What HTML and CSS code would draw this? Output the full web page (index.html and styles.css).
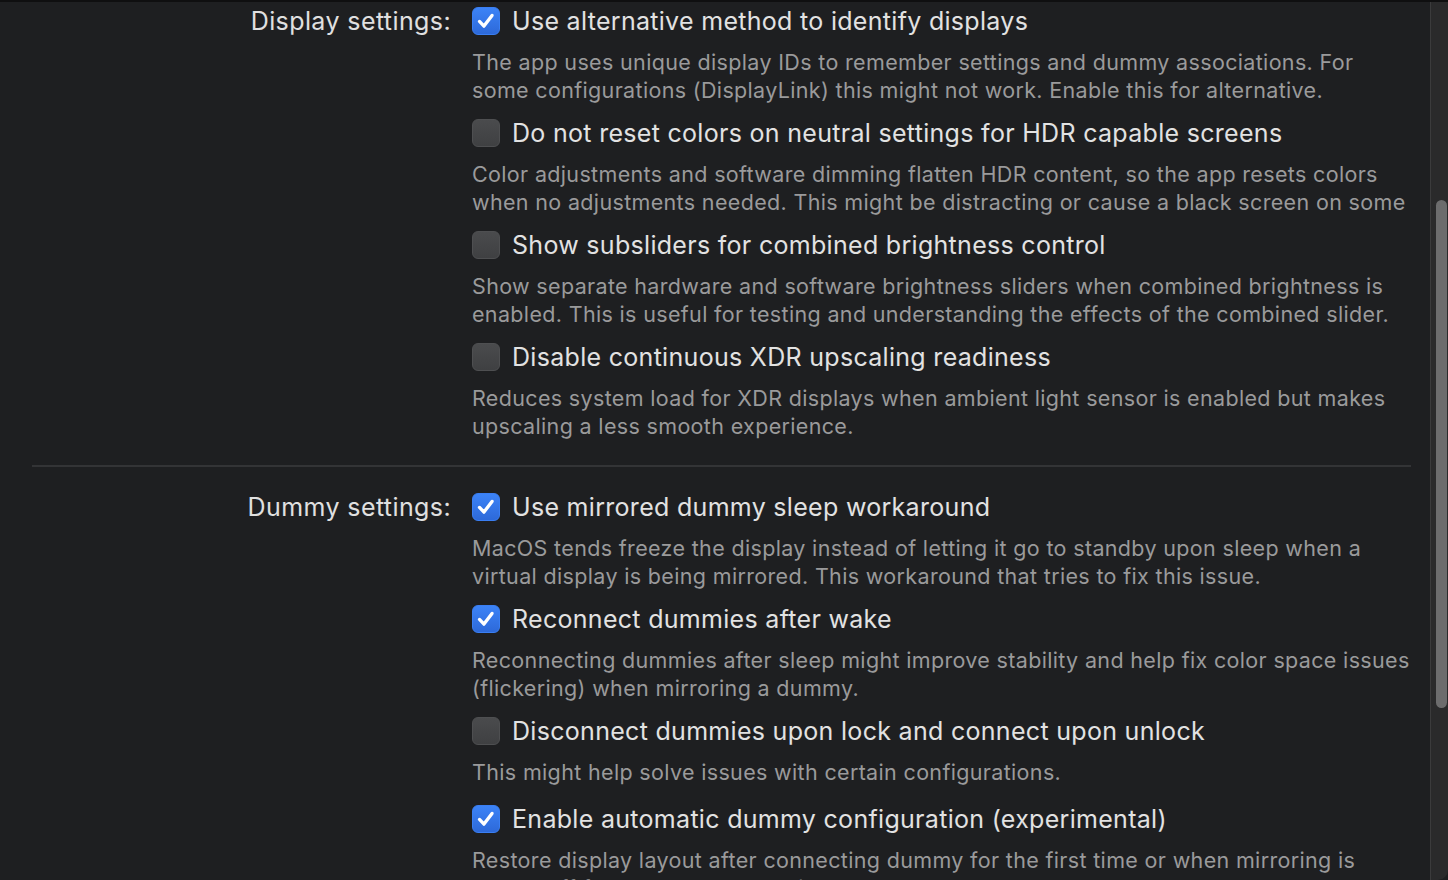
FILE: index.html
```html
<!DOCTYPE html>
<html>
<head>
<meta charset="utf-8">
<link rel="stylesheet" href="styles.css">
</head>
<body>
<div class="window">
  <div class="topline"></div>
  <div class="frame">
    <div class="content">
      <section class="section">
        <div class="label">Display settings:</div>
        <div class="options">
          <div class="option">
            <div class="row"><span class="cb on"><svg viewBox="0 0 28 28"><path d="M7 14.5 L11.8 19.5 L20.5 8"/></svg></span><span class="title">Use alternative method to identify displays</span></div>
            <div class="desc"><div>The app uses unique display IDs to remember settings and dummy associations. For</div><div>some configurations (DisplayLink) this might not work. Enable this for alternative.</div></div>
          </div>
          <div class="option">
            <div class="row"><span class="cb"></span><span class="title">Do not reset colors on neutral settings for HDR capable screens</span></div>
            <div class="desc"><div>Color adjustments and software dimming flatten HDR content, so the app resets colors</div><div>when no adjustments needed. This might be distracting or cause a black screen on some</div></div>
          </div>
          <div class="option">
            <div class="row"><span class="cb"></span><span class="title">Show subsliders for combined brightness control</span></div>
            <div class="desc"><div>Show separate hardware and software brightness sliders when combined brightness is</div><div>enabled. This is useful for testing and understanding the effects of the combined slider.</div></div>
          </div>
          <div class="option last">
            <div class="row"><span class="cb"></span><span class="title">Disable continuous XDR upscaling readiness</span></div>
            <div class="desc"><div>Reduces system load for XDR displays when ambient light sensor is enabled but makes</div><div>upscaling a less smooth experience.</div></div>
          </div>
        </div>
      </section>
      <div class="separator"></div>
      <section class="section">
        <div class="label">Dummy settings:</div>
        <div class="options">
          <div class="option">
            <div class="row"><span class="cb on"><svg viewBox="0 0 28 28"><path d="M7 14.5 L11.8 19.5 L20.5 8"/></svg></span><span class="title">Use mirrored dummy sleep workaround</span></div>
            <div class="desc"><div>MacOS tends freeze the display instead of letting it go to standby upon sleep when a</div><div>virtual display is being mirrored. This workaround that tries to fix this issue.</div></div>
          </div>
          <div class="option">
            <div class="row"><span class="cb on"><svg viewBox="0 0 28 28"><path d="M7 14.5 L11.8 19.5 L20.5 8"/></svg></span><span class="title">Reconnect dummies after wake</span></div>
            <div class="desc"><div>Reconnecting dummies after sleep might improve stability and help fix color space issues</div><div>(flickering) when mirroring a dummy.</div></div>
          </div>
          <div class="option single">
            <div class="row"><span class="cb"></span><span class="title">Disconnect dummies upon lock and connect upon unlock</span></div>
            <div class="desc"><div>This might help solve issues with certain configurations.</div></div>
          </div>
          <div class="option">
            <div class="row"><span class="cb on"><svg viewBox="0 0 28 28"><path d="M7 14.5 L11.8 19.5 L20.5 8"/></svg></span><span class="title">Enable automatic dummy configuration (experimental)</span></div>
            <div class="desc"><div>Restore display layout after connecting dummy for the first time or when mirroring is</div><div>turned off for better user experience.</div></div>
          </div>
        </div>
      </section>
    </div>
    <div class="scrollbar"><div class="thumb"></div></div>
  </div>
</div>
</body>
</html>
```
FILE: styles.css
```css
html, body {
  margin: 0;
  padding: 0;
  background: #1e1f21;
  overflow: hidden;
}
.window {
  width: 1448px;
  height: 880px;
  overflow: hidden;
  display: flex;
  flex-direction: column;
  font-family: Inter, "Noto Sans", sans-serif;
}
.topline {
  height: 2px;
  background: #0f0f10;
  flex: none;
}
.frame {
  flex: 1;
  display: flex;
  min-height: 0;
}
.content {
  flex: 1;
  padding: 5px 19px 0 32px;
  min-width: 0;
}
.section {
  display: grid;
  grid-template-columns: 419px 1fr;
  column-gap: 21px;
}
.label {
  text-align: right;
  color: #e0e0e0;
  font-size: 25px;
  line-height: 28px;
  letter-spacing: 0.4px;
}
.options {
  display: flex;
  flex-direction: column;
}
.option {
  margin-bottom: 15px;
}
.option.last {
  margin-bottom: 25px;
}
.option.single {
  margin-bottom: 19px;
}
.row {
  display: flex;
  align-items: center;
  height: 28px;
}
.cb {
  width: 28px;
  height: 28px;
  box-sizing: border-box;
  border-radius: 6px;
  background: linear-gradient(#4a4b4d, #3f4042);
  border: 1px solid #4e4f51;
  flex: none;
  margin-right: 12px;
}
.cb.on {
  background: linear-gradient(#3c83f7, #2d69d9);
  border-color: #3a7ef2;
}
.cb svg {
  display: block;
  width: 26px;
  height: 26px;
}
.cb svg path {
  fill: none;
  stroke: #ffffff;
  stroke-width: 3.6;
  stroke-linecap: round;
  stroke-linejoin: round;
}
.title {
  color: #e2e2e2;
  font-size: 25px;
  line-height: 28px;
  white-space: nowrap;
  letter-spacing: 0.3px;
}
.desc {
  margin-top: 13px;
  color: #9a9a9b;
  font-size: 21.5px;
  line-height: 28px;
  white-space: nowrap;
  letter-spacing: 0.34px;
}
.separator {
  height: 2px;
  background: #333436;
  margin-bottom: 26px;
}
.scrollbar {
  width: 17px;
  flex: none;
  background: #2a2a2b;
  border-left: 1px solid #3b3b3c;
  border-bottom-right-radius: 10px;
  position: relative;
}
.thumb {
  position: absolute;
  left: 5px;
  top: 198px;
  width: 11px;
  height: 508px;
  border-radius: 6px;
  background: #6c6c6d;
}
```
